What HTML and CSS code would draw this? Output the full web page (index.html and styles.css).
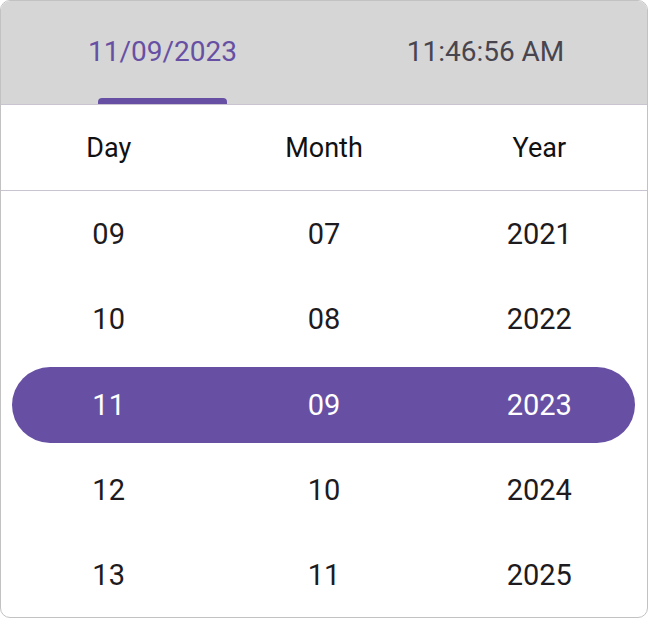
FILE: index.html
```html
<!DOCTYPE html>
<html lang="en">
<head>
<meta charset="utf-8">
<title>Date picker</title>
<link rel="stylesheet" href="styles.css">
</head>
<body>
<div class="picker">
  <div class="tabs">
    <div class="tab tab-active"><span>11/09/2023</span><i class="indicator"></i></div>
    <div class="tab"><span>11:46:56 AM</span></div>
  </div>
  <div class="row row-head">
    <div class="cell">Day</div>
    <div class="cell">Month</div>
    <div class="cell">Year</div>
  </div>
  <div class="list">
    <div class="row"><div class="cell">09</div><div class="cell">07</div><div class="cell">2021</div></div>
    <div class="row"><div class="cell">10</div><div class="cell">08</div><div class="cell">2022</div></div>
    <div class="row row-selected"><div class="cell">11</div><div class="cell">09</div><div class="cell">2023</div></div>
    <div class="row"><div class="cell">12</div><div class="cell">10</div><div class="cell">2024</div></div>
    <div class="row"><div class="cell">13</div><div class="cell">11</div><div class="cell">2025</div></div>
  </div>
</div>
</body>
</html>
```
FILE: styles.css
```css
html, body {
  margin: 0;
  padding: 0;
  background: #ffffff;
}
body {
  font-family: Roboto, "Liberation Sans", sans-serif;
  width: 648px;
  height: 620px;
}
.picker {
  box-sizing: border-box;
  width: 648px;
  border: 1px solid #c2c2c2;
  border-radius: 10px;
  overflow: hidden;
  background: #ffffff;
}
.tabs {
  display: grid;
  grid-template-columns: 1fr 1fr;
  height: 103px;
  background: #d6d6d6;
  border-bottom: 1px solid #cac4d0;
}
.tab {
  display: flex;
  flex-direction: column;
  align-items: center;
  justify-content: space-between;
  font-size: 28px;
  color: #49454f;
  padding-top: 35px;
  line-height: 32px;
}
.tab-active {
  color: #6750a4;
}
.indicator {
  display: block;
  width: 129px;
  height: 6px;
  background: #6750a4;
  border-radius: 4px 4px 0 0;
}
.list {
  display: grid;
  grid-auto-rows: 85.3px;
}
.row {
  display: grid;
  grid-template-columns: 1fr 1fr 1fr;
  align-items: center;
  height: 85.3px;
  padding-top: 1px;
  box-sizing: border-box;
  font-size: 29px;
  color: #1d1b20;
  position: relative;
  isolation: isolate;
}
.row-head {
  height: 84px;
  padding-top: 1px;
  font-size: 27px;
  color: #111111;
  border-bottom: 1px solid #cac4d0;
  box-sizing: content-box;
}
.cell {
  text-align: center;
}
.row-selected {
  color: #ffffff;
}
.row-selected::before {
  content: "";
  position: absolute;
  left: 11px;
  right: 12px;
  top: 5px;
  bottom: 4px;
  background: #6750a4;
  border-radius: 40px;
  z-index: -1;
}
```
